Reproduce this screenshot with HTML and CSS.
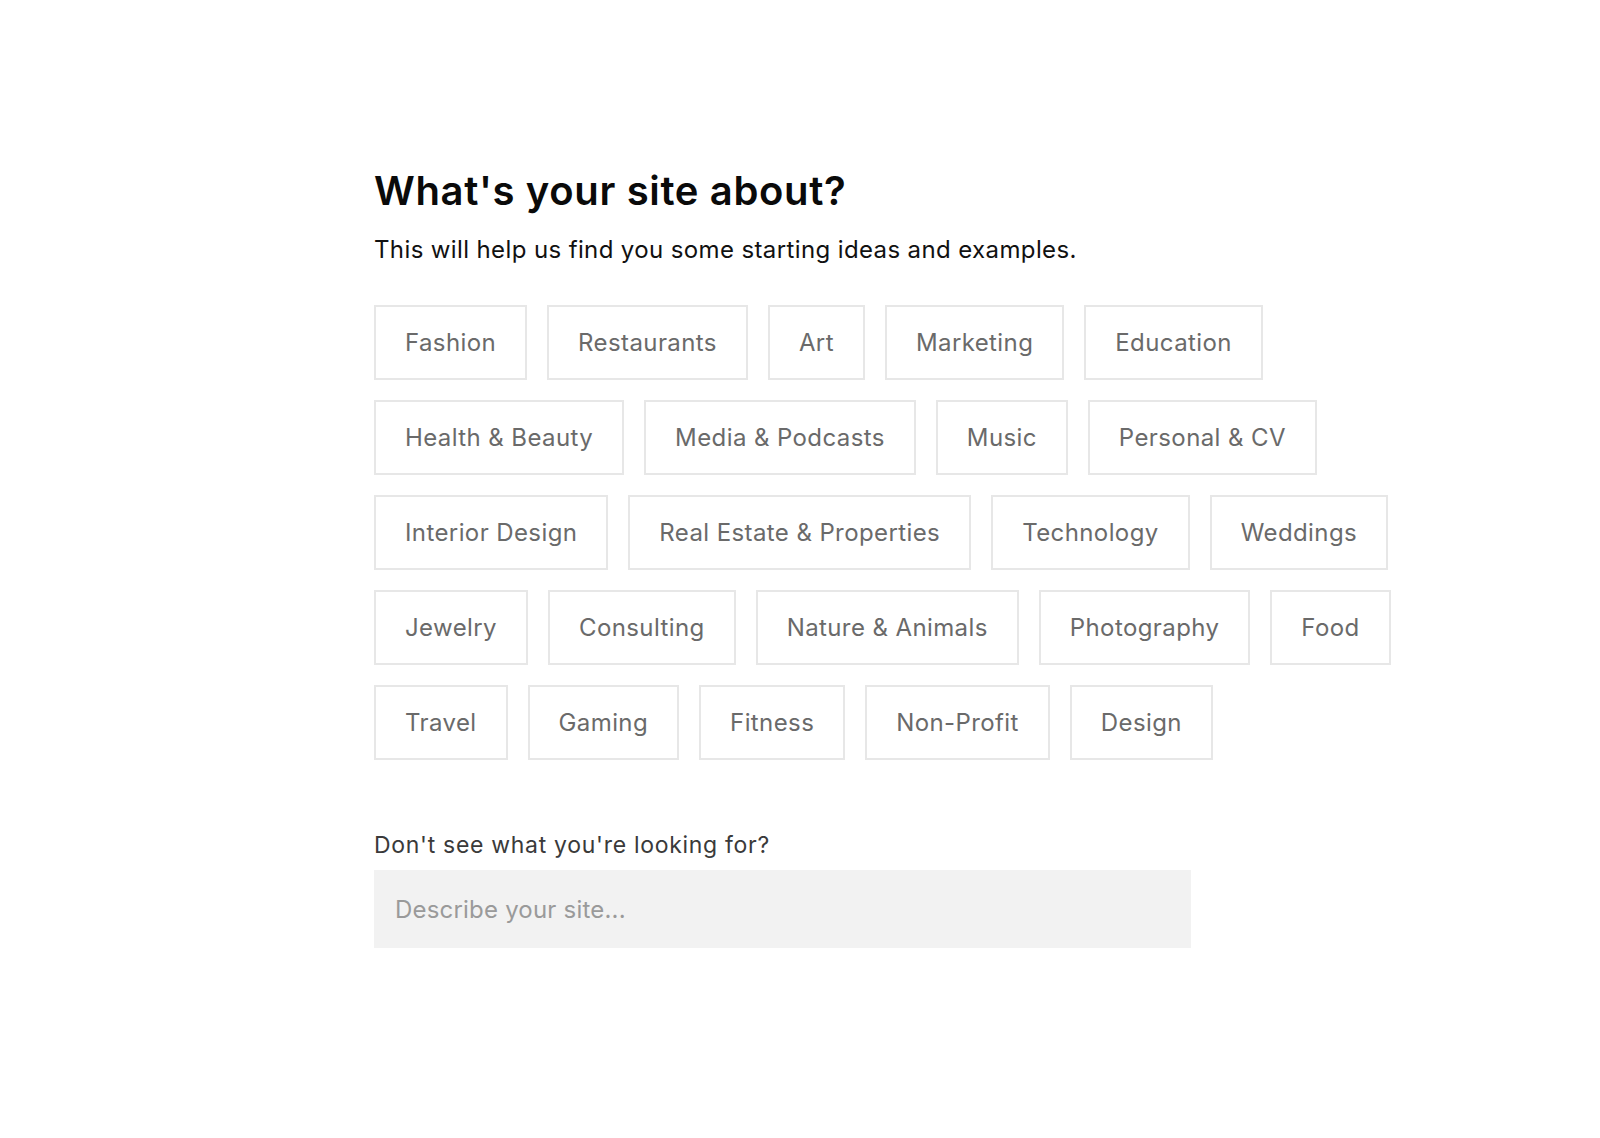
FILE: index.html
```html
<!DOCTYPE html>
<html lang="en">
<head>
<meta charset="utf-8">
<title>What's your site about?</title>
<link rel="stylesheet" href="styles.css">
</head>
<body>
<main class="page">
  <h1 class="title">What's your site about?</h1>
  <p class="subtitle">This will help us find you some starting ideas and examples.</p>
  <div class="chips">
    <button class="chip">Fashion</button>
    <button class="chip">Restaurants</button>
    <button class="chip">Art</button>
    <button class="chip">Marketing</button>
    <button class="chip">Education</button>
    <button class="chip">Health &amp; Beauty</button>
    <button class="chip">Media &amp; Podcasts</button>
    <button class="chip">Music</button>
    <button class="chip">Personal &amp; CV</button>
    <button class="chip">Interior Design</button>
    <button class="chip">Real Estate &amp; Properties</button>
    <button class="chip">Technology</button>
    <button class="chip">Weddings</button>
    <button class="chip">Jewelry</button>
    <button class="chip">Consulting</button>
    <button class="chip">Nature &amp; Animals</button>
    <button class="chip">Photography</button>
    <button class="chip">Food</button>
    <button class="chip">Travel</button>
    <button class="chip">Gaming</button>
    <button class="chip">Fitness</button>
    <button class="chip">Non-Profit</button>
    <button class="chip">Design</button>
  </div>
  <label class="other-label" for="describe">Don't see what you're looking for?</label>
  <input class="other-input" id="describe" type="text" placeholder="Describe your site...">
</main>
</body>
</html>
```

FILE: styles.css
```css
html, body {
  margin: 0;
  padding: 0;
  background: #ffffff;
}

body {
  font-family: Inter, "Liberation Sans", sans-serif;
  color: #111111;
}

.page {
  padding: 168px 0 0 374px;
  width: 1100px;
}

.title {
  margin: 0;
  font-size: 40px;
  line-height: 46px;
  font-weight: 600;
  letter-spacing: 0.65px;
  color: #0a0a0a;
}

.subtitle {
  margin: 21px 0 0;
  font-size: 24px;
  line-height: 30px;
  font-weight: 400;
  letter-spacing: 0.38px;
  color: #111111;
}

.chips {
  margin-top: 40px;
  display: flex;
  flex-wrap: wrap;
  gap: 20px 20px;
}

.chip {
  box-sizing: border-box;
  height: 75px;
  padding: 0 29px;
  border: 2px solid #e7e7e7;
  background: #ffffff;
  font-family: inherit;
  font-size: 24px;
  font-weight: 400;
  letter-spacing: 0.4px;
  color: #6a6a6a;
  display: flex;
  align-items: center;
  cursor: pointer;
}

.other-label {
  display: block;
  margin-top: 71px;
  font-size: 23px;
  line-height: 28px;
  letter-spacing: 0.7px;
  color: #3a3a3a;
}

.other-input {
  display: block;
  box-sizing: border-box;
  margin-top: 11px;
  width: 817px;
  height: 78px;
  padding: 0 21px;
  border: 0;
  outline: none;
  background: #f2f2f2;
  font-family: inherit;
  font-size: 24px;
  letter-spacing: 0.2px;
  color: #333333;
}

.other-input::placeholder {
  color: #9a9a9a;
}
```
